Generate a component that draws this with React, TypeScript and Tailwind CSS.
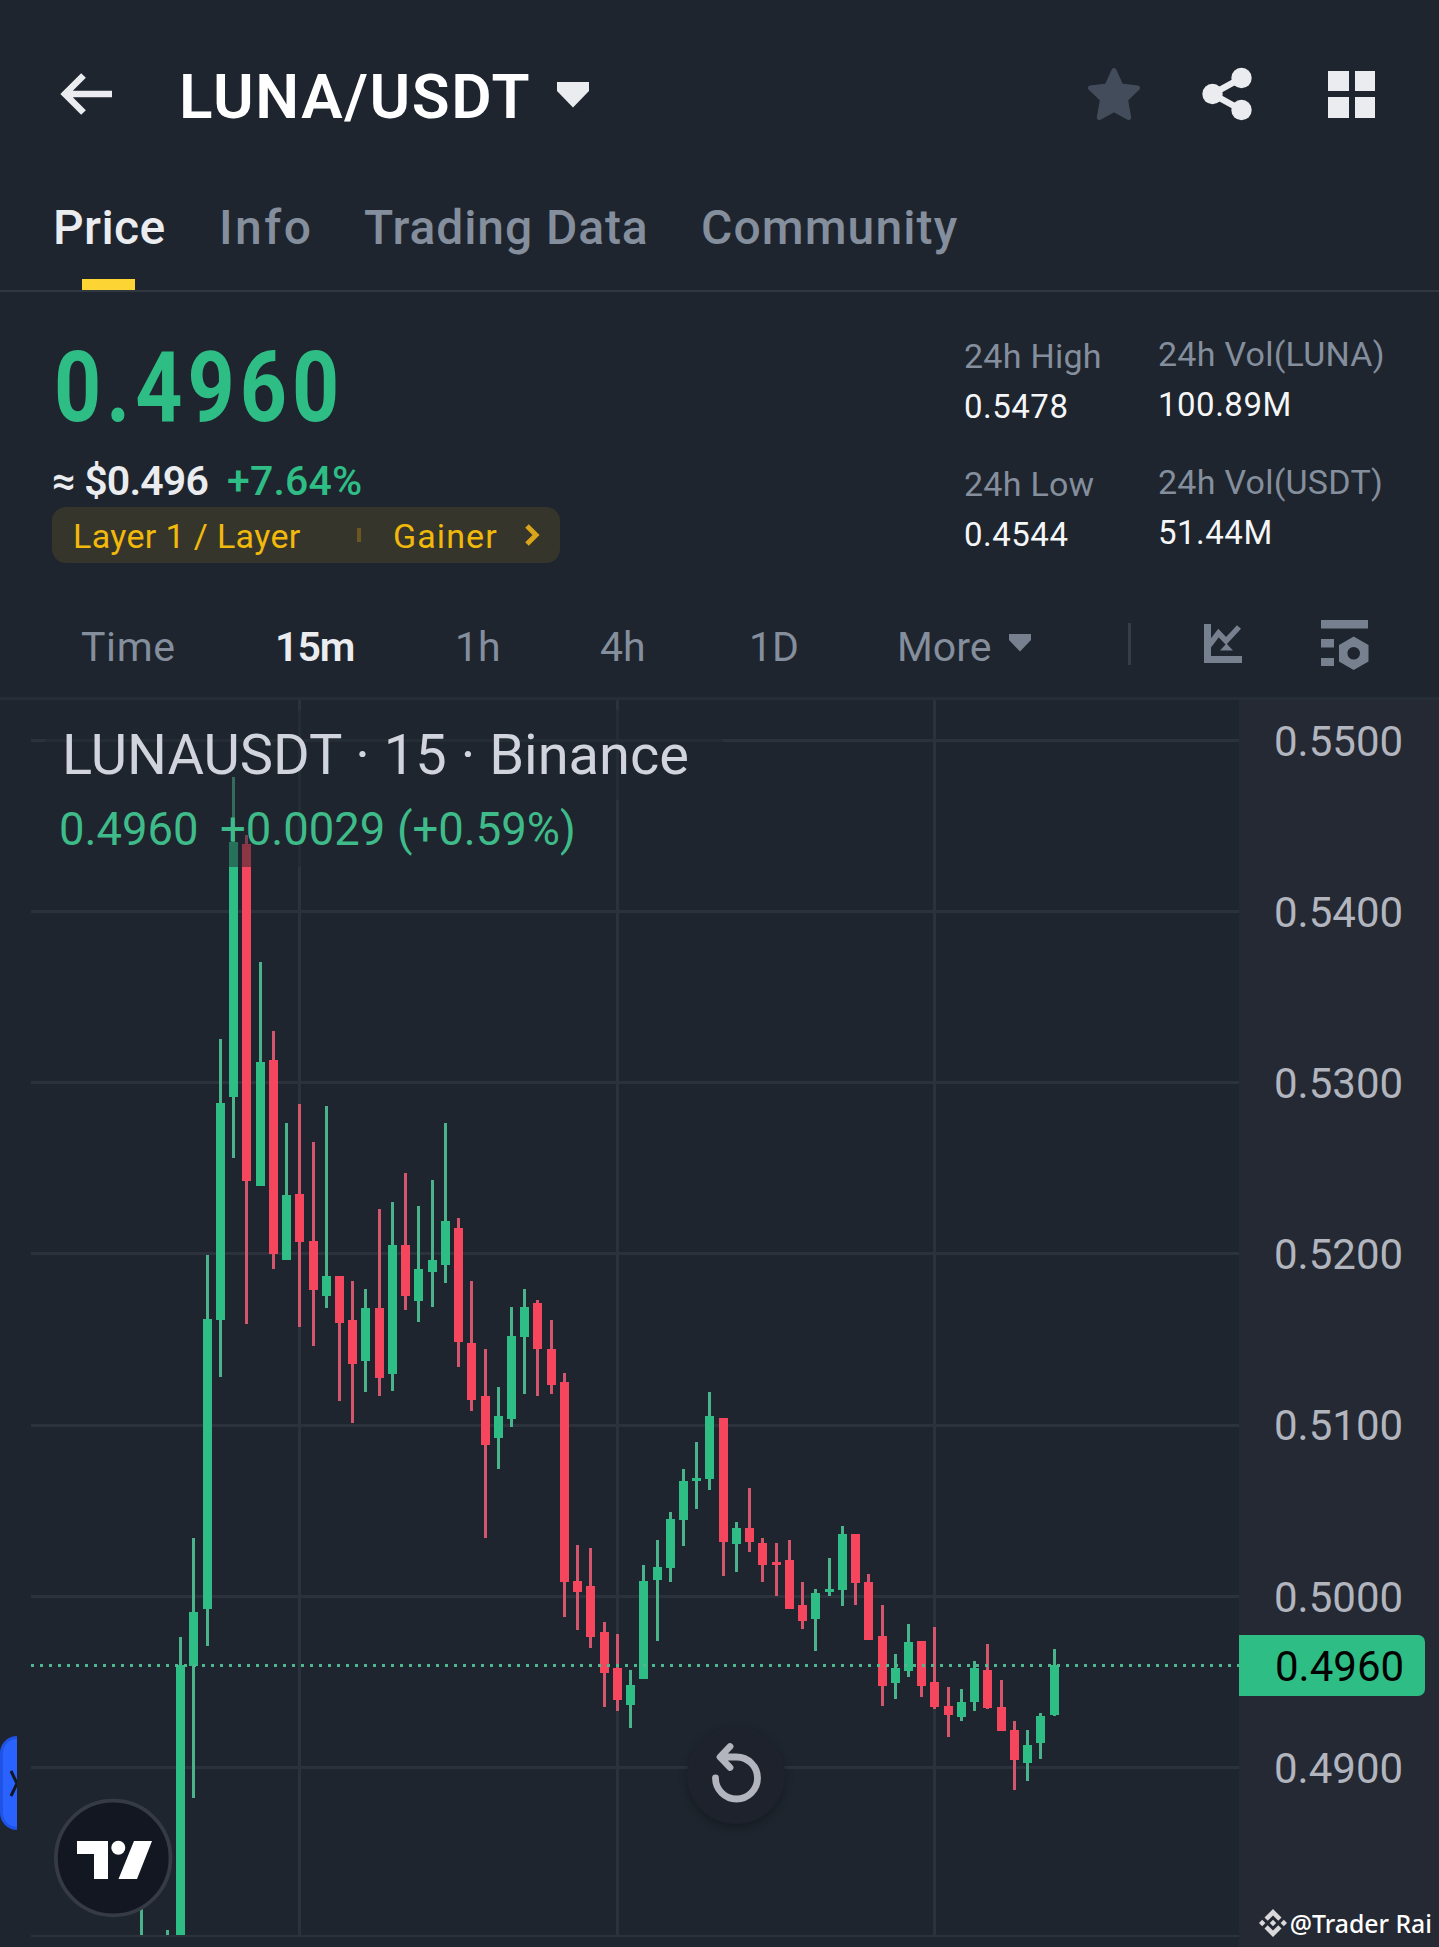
import React from 'react';

type Candle = [x: number, up: 0 | 1, high: number, top: number, bottom: number, low: number];

// x centre, direction, wick top, body top, body bottom, wick bottom
const candles: Candle[] = [
  [141.5, 1, 1880, 1935, 1935, 1935],
  [167.5, 1, 1930, 1935, 1935, 1935],
  [180.5, 1, 1637, 1665, 1935, 1935],
  [193.5, 1, 1538, 1612, 1666, 1798],
  [207.5, 1, 1255, 1319, 1609, 1646],
  [220.5, 1, 1039, 1103, 1320, 1377],
  [233.5, 1, 777, 842, 1097, 1158],
  [246.5, 0, 835, 844, 1181, 1324],
  [260.5, 1, 962, 1062, 1186, 1186],
  [273.5, 0, 1031, 1060, 1254, 1269],
  [286.5, 1, 1123, 1195, 1260, 1260],
  [299.5, 0, 1104, 1194, 1242, 1327],
  [313.5, 0, 1142, 1241, 1290, 1346],
  [326.5, 1, 1106, 1276, 1296, 1308],
  [339.5, 0, 1276, 1276, 1323, 1401],
  [352.5, 0, 1281, 1320, 1364, 1423],
  [365.5, 1, 1289, 1308, 1361, 1392],
  [379.5, 0, 1209, 1308, 1378, 1396],
  [392.5, 1, 1202, 1245, 1374, 1391],
  [405.5, 0, 1173, 1245, 1296, 1310],
  [418.5, 1, 1206, 1269, 1301, 1322],
  [432.5, 1, 1180, 1260, 1272, 1307],
  [445.5, 1, 1123, 1221, 1265, 1283],
  [458.5, 0, 1218, 1228, 1342, 1367],
  [471.5, 0, 1281, 1343, 1400, 1411],
  [485.5, 0, 1349, 1396, 1445, 1538],
  [498.5, 1, 1387, 1416, 1438, 1469],
  [511.5, 1, 1307, 1336, 1419, 1427],
  [524.5, 1, 1289, 1307, 1337, 1394],
  [537.5, 0, 1300, 1303, 1349, 1396],
  [551.5, 0, 1320, 1349, 1385, 1394],
  [564.5, 0, 1373, 1382, 1582, 1617],
  [577.5, 0, 1545, 1581, 1592, 1630],
  [590.5, 0, 1548, 1586, 1637, 1648],
  [604.5, 0, 1622, 1632, 1673, 1707],
  [617.5, 0, 1634, 1668, 1700, 1711],
  [630.5, 1, 1670, 1685, 1705, 1728],
  [643.5, 1, 1565, 1581, 1679, 1679],
  [657.5, 1, 1540, 1567, 1580, 1641],
  [670.5, 1, 1512, 1519, 1568, 1582],
  [683.5, 1, 1469, 1481, 1520, 1546],
  [696.5, 1, 1442, 1478, 1481, 1509],
  [709.5, 1, 1392, 1416, 1479, 1490],
  [723.5, 0, 1418, 1418, 1542, 1576],
  [736.5, 1, 1522, 1528, 1544, 1572],
  [749.5, 0, 1488, 1528, 1542, 1552],
  [762.5, 0, 1538, 1543, 1565, 1582],
  [776.5, 0, 1543, 1562, 1565, 1596],
  [789.5, 0, 1540, 1560, 1609, 1609],
  [802.5, 0, 1582, 1605, 1621, 1629],
  [815.5, 1, 1589, 1593, 1619, 1651],
  [829.5, 1, 1558, 1589, 1592, 1596],
  [842.5, 1, 1526, 1534, 1590, 1606],
  [855.5, 0, 1534, 1534, 1583, 1605],
  [868.5, 0, 1574, 1582, 1640, 1640],
  [882.5, 0, 1605, 1636, 1686, 1706],
  [895.5, 1, 1654, 1668, 1683, 1699],
  [908.5, 1, 1624, 1642, 1671, 1677],
  [921.5, 0, 1641, 1641, 1686, 1697],
  [934.5, 0, 1627, 1682, 1707, 1709],
  [948.5, 0, 1687, 1706, 1715, 1737],
  [961.5, 1, 1689, 1702, 1717, 1721],
  [974.5, 1, 1661, 1668, 1702, 1711],
  [987.5, 0, 1644, 1670, 1708, 1709],
  [1001.5, 0, 1680, 1707, 1731, 1731],
  [1014.5, 0, 1721, 1730, 1760, 1790],
  [1027.5, 1, 1730, 1745, 1763, 1781],
  [1040.5, 1, 1713, 1716, 1743, 1759],
  [1054.5, 1, 1649, 1665, 1715, 1716],
];

const gridRows = [740.5, 911.5, 1082.5, 1253.5, 1425.5, 1596.5, 1767.5];
const gridCols = [299.5, 617.5, 934.5];
const axisLabels = ['0.5500', '0.5400', '0.5300', '0.5200', '0.5100', '0.5000', '0.4900'];

const Header: React.FC = () => (
  <header className="flex h-[188px] items-center pl-[60px] pr-[64px]">
    <svg width="53" height="42" viewBox="0 0 53 42" fill="none" stroke="#eaecef" strokeWidth="6.6">
      <path d="M52 21H6M23.5 2.5L5 21l18.500 18.500" />
    </svg>
    <h1 className="ml-[66px] w-[371px] whitespace-nowrap pt-[5px] text-[62px] leading-none font-semibold tracking-[1.6px] text-white">
      LUNA/USDT
    </h1>
    <svg width="34" height="26" viewBox="0 0 34 26" fill="#eaecef" className="mt-[2px] ml-[6px]">
      <path d="M1 0h32v9L17 25.500 1 9z" />
    </svg>
    <div className="ml-auto flex items-center">
      <svg width="54" height="54" viewBox="0 0 54 54" fill="#434c5a" stroke="#434c5a" strokeWidth="5" strokeLinejoin="round">
        <path d="M27 3.500l7 15.500 16.500 2-12 11.500 3.200 18L27 42.500l-14.700 8 3.200-18L3.500 21 20 19z" />
      </svg>
      <svg width="50" height="54" viewBox="0 0 50 54" fill="#eaecef" className="ml-[61px]">
        <path d="M39.500 11L10.500 27l29 16" fill="none" stroke="#eaecef" strokeWidth="6.5" />
        <circle cx="39.500" cy="11" r="10.200" />
        <circle cx="10.500" cy="27" r="10.200" />
        <circle cx="39.500" cy="43" r="10.200" />
      </svg>
      <div className="ml-[76px] grid grid-cols-2 gap-[6px]">
        <i className="size-[20.5px] bg-[#eaecef]" />
        <i className="size-[20.5px] bg-[#eaecef]" />
        <i className="size-[20.5px] bg-[#eaecef]" />
        <i className="size-[20.5px] bg-[#eaecef]" />
      </div>
    </div>
  </header>
);

const Tabs: React.FC = () => (
  <nav className="flex h-[104px] border-b-2 border-[#30373f] pl-[53px] pt-[16px] text-[48px] leading-[48px] font-medium whitespace-nowrap text-[#848e9c]">
    <div className="flex w-[114px] flex-col justify-between tracking-[0.4px] text-[#eaecef]">
      <span>Price</span>
      <i className="ml-[29px] h-[11px] w-[53px] bg-[#fcd535]" />
    </div>
    <span className="ml-[52px] w-[93px] tracking-[2.5px]">Info</span>
    <span className="ml-[52px] w-[286px] tracking-[0.9px]">Trading Data</span>
    <span className="ml-[51px] tracking-[1.1px]">Community</span>
  </nav>
);

interface StatProps {
  label: string;
  value: string;
}

const Stat: React.FC<StatProps> = ({ label, value }) => (
  <div className="whitespace-nowrap leading-[50px]">
    <div className="text-[34px] tracking-[0.25px] text-[#848e9c]">{label}</div>
    <div className="pt-px text-[33px] leading-[49px] tracking-[0.5px] text-[#f5f6f8]">{value}</div>
  </div>
);

const Summary: React.FC = () => (
  <section className="flex h-[305px] pl-[52px]">
    <div className="w-[912px] pt-[46px]">
      <div className="h-[98px] origin-left translate-x-[2px] scale-x-[0.84] text-[98px] leading-[100px] font-bold tracking-[6px] text-[#2ebd85]">
        0.4960
      </div>
      <div className="mt-[24px] flex h-[42px] text-[41px] leading-[42px] font-semibold whitespace-nowrap">
        <span className="w-[175px] tracking-[-0.8px] text-[#eaecef]">≈ $0.496</span>
        <span className="font-medium tracking-[0.2px] text-[#2ebd85]">+7.64%</span>
      </div>
      <div className="mt-[5px] flex h-14 w-[508px] items-center rounded-[14px] bg-[#36352c] pl-[21px] text-[34px] whitespace-nowrap text-[#f0b90b]">
        <span className="w-[284px] pt-[2px] tracking-[0.35px]">Layer 1 / Layer</span>
        <i className="h-[14px] w-[4px] bg-[#6b5723]" />
        <span className="ml-[32px] w-[131px] pt-[2px] tracking-[1.1px]">Gainer</span>
        <svg width="16" height="22" viewBox="0 0 16 22" fill="none" stroke="#d9a51b" strokeWidth="5">
          <path d="M3 2l9 9-9 9" />
        </svg>
      </div>
    </div>
    <div className="flex w-[194px] flex-col gap-[28px] pt-[39px]">
      <Stat label="24h High" value="0.5478" />
      <Stat label="24h Low" value="0.4544" />
    </div>
    <div className="flex flex-col gap-[28px] pt-[37px]">
      <Stat label="24h Vol(LUNA)" value="100.89M" />
      <Stat label="24h Vol(USDT)" value="51.44M" />
    </div>
  </section>
);

const Toolbar: React.FC = () => (
  <div className="flex h-[100px] items-center pl-[81px] text-[41px] whitespace-nowrap text-[#848e9c]">
    <span className="w-[194px] pt-px tracking-[0.6px]">Time</span>
    <span className="w-[180px] pt-px font-semibold tracking-[-1px] text-[#eaecef]">15m</span>
    <span className="w-[145px] pt-px">1h</span>
    <span className="w-[149px] pt-px">4h</span>
    <span className="w-[148px] pt-px">1D</span>
    <span className="w-[112px] pt-px">More</span>
    <svg width="22" height="18" viewBox="0 0 22 18" fill="#76808f" className="mb-[8px]">
      <path d="M0 0h22v6L11 17.500 0 6z" />
    </svg>
    <i className="ml-[97px] mb-[6px] h-[42px] w-[3px] bg-[#363d47]" />
    <svg width="39" height="40" viewBox="0 0 39 40" className="ml-[73px] mb-[6px]" fill="#76808f">
      <path d="M0 0h7v32h31v7H0z" />
      <path d="M5 21.500L14.500 9l7.500 8L35 3" fill="none" stroke="#76808f" strokeWidth="5.500" />
      <path d="M22.500 19.500l6.500 7H16z" />
    </svg>
    <svg width="48" height="50" viewBox="0 0 48 50" className="ml-[78px] mb-[4px]" fill="#76808f">
      <path d="M0 0h47v8.500H0zM0 19h13v8.500H0zM0 38h13v8H0z" />
      <path fillRule="evenodd" d="M32.700 16.500L47.500 25v16.500L32.700 50 18 41.500V25zM32.700 27a6.300 6.300 0 1 0 0 12.600 6.300 6.300 0 0 0 0-12.600z" />
    </svg>
  </div>
);

const PriceChart: React.FC = () => (
  <svg width="1239" height="1250" viewBox="0 697 1239 1250" shapeRendering="crispEdges" className="block">
    <g fill="#2b323c">
      {gridRows.map((y) => (
        <rect key={y} x="31" y={y - 1.5} width="1208" height="3" />
      ))}
      {gridCols.map((x) => (
        <rect key={x} x={x - 1.5} y="697" width="3" height="1238" />
      ))}
      <rect x="31" y="1935" width="1208" height="2" />
    </g>
    {candles.map(([x, up, high, top, bottom, low]) => (
      <g key={x}>
        <rect x={x - 1.5} y={high} width="3" height={low - high} fill={up ? '#4bb38b' : '#d4566c'} />
        <rect x={x - 4.5} y={top} width="9" height={bottom - top} fill={up ? '#2ebd85' : '#f6465d'} />
      </g>
    ))}
    <path d="M31 1665.500H1239" stroke="#4fb690" strokeWidth="3" strokeDasharray="3 6" />
  </svg>
);

const Legend: React.FC = () => (
  <div className="absolute left-[45px] top-[13px] whitespace-nowrap">
    <div className="h-[90px] w-[678px] bg-[rgba(30,37,46,0.5)] pl-[17px] pt-[17px] text-[56px] leading-[56px] text-[#d1d4dc]">
      LUNAUSDT · 15 · Binance
    </div>
    <div className="flex h-[67px] w-[540px] bg-[rgba(30,37,46,0.5)] pl-[14px] pt-[7px] text-[45.4px] leading-[46px] text-[#3fbb8a]">
      <span className="w-[161px]">0.4960</span>
      <span className="w-[177px]">+0.0029</span>
      <span>(+0.59%)</span>
    </div>
  </div>
);

const PriceAxis: React.FC = () => (
  <div className="relative flex w-[200px] flex-col gap-[129.2px] bg-[#252933] pl-[35px] pt-[23.6px] text-[42px] leading-[42px] text-[#b2b5be]">
    {axisLabels.map((label) => (
      <span key={label} className="h-[42px]">{label}</span>
    ))}
    <div className="absolute left-0 top-[938px] h-[61px] w-[186px] rounded-r-[7px] bg-[#2ebd85] pl-[36px] leading-[63px] text-black">
      0.4960
    </div>
  </div>
);

const ResetButton: React.FC = () => (
  <button className="absolute left-[687px] top-[1029px] size-[98px] rounded-full bg-[#1e222d] shadow-[0_4px_8px_rgba(0,0,0,0.25)]">
    <svg width="98" height="98" viewBox="687 1726 98 98" fill="none" stroke="#b2b5be" strokeWidth="6.8" strokeLinecap="round" strokeLinejoin="round">
      <path d="M715.500 1778a21 21 0 1 0 21-21h-16M730 1746.500l-10 10.500 10 10.500" />
    </svg>
  </button>
);

const TradingViewBadge: React.FC = () => (
  <div className="absolute left-[54px] top-[1101px]">
    <svg width="119" height="120" viewBox="54 1798 119 120">
      <circle cx="113.200" cy="1858" r="57.300" fill="#131722" stroke="#363a45" strokeWidth="3.800" />
      <path d="M77 1841h31v38H94v-25H77zM134 1841h18l-15 38h-18.500z" fill="#fff" />
      <circle cx="118.300" cy="1847.800" r="7" fill="#fff" />
    </svg>
  </div>
);

const Watermark: React.FC = () => (
  <div className="absolute right-[7px] bottom-[7px] flex items-center gap-[3px] font-['Noto_Sans'] text-[24.8px] leading-[34px] font-medium whitespace-nowrap text-white">
    <svg width="28" height="28" viewBox="0 0 28 28" fill="#d9d9dc">
      <path d="M14 0l8.500 8.500-3.200 3.200L14 6.400l-5.300 5.300-3.200-3.200zM3.200 10.800L6.400 14l-3.200 3.200L0 14zM14 10.800l3.200 3.200-3.200 3.200-3.200-3.200zM24.800 10.800L28 14l-3.200 3.200-3.200-3.200zM8.700 16.300l5.300 5.300 5.300-5.300 3.200 3.200L14 28l-8.500-8.500z" />
    </svg>
    <span>@Trader Rai</span>
  </div>
);

const App: React.FC = () => {
  return (
    <main className="relative h-[1947px] w-[1439px] overflow-hidden bg-[#1e252e] font-[Roboto,sans-serif]">
      <Header />
      <Tabs />
      <Summary />
      <Toolbar />
      {/* Gráfico de velas */}
      <section className="relative flex h-[1250px]">
        <PriceChart />
        <PriceAxis />
        <i className="absolute inset-x-0 top-0 h-[3px] bg-[#272d36]" />
        <Legend />
        <ResetButton />
        <TradingViewBadge />
        <div className="absolute left-0 top-[1039px] h-[94px] w-[17px] overflow-hidden rounded-l-[17px] border-y-3 border-l-3 border-[#1e53e5] bg-[#2962ff]">
          <svg width="14" height="88" viewBox="3 1739 14 88" fill="none" stroke="#131722" strokeWidth="3">
            <path d="M11 1771l6 12.500-6 12.500" />
          </svg>
        </div>
        <Watermark />
      </section>
    </main>
  );
};

export default App;
